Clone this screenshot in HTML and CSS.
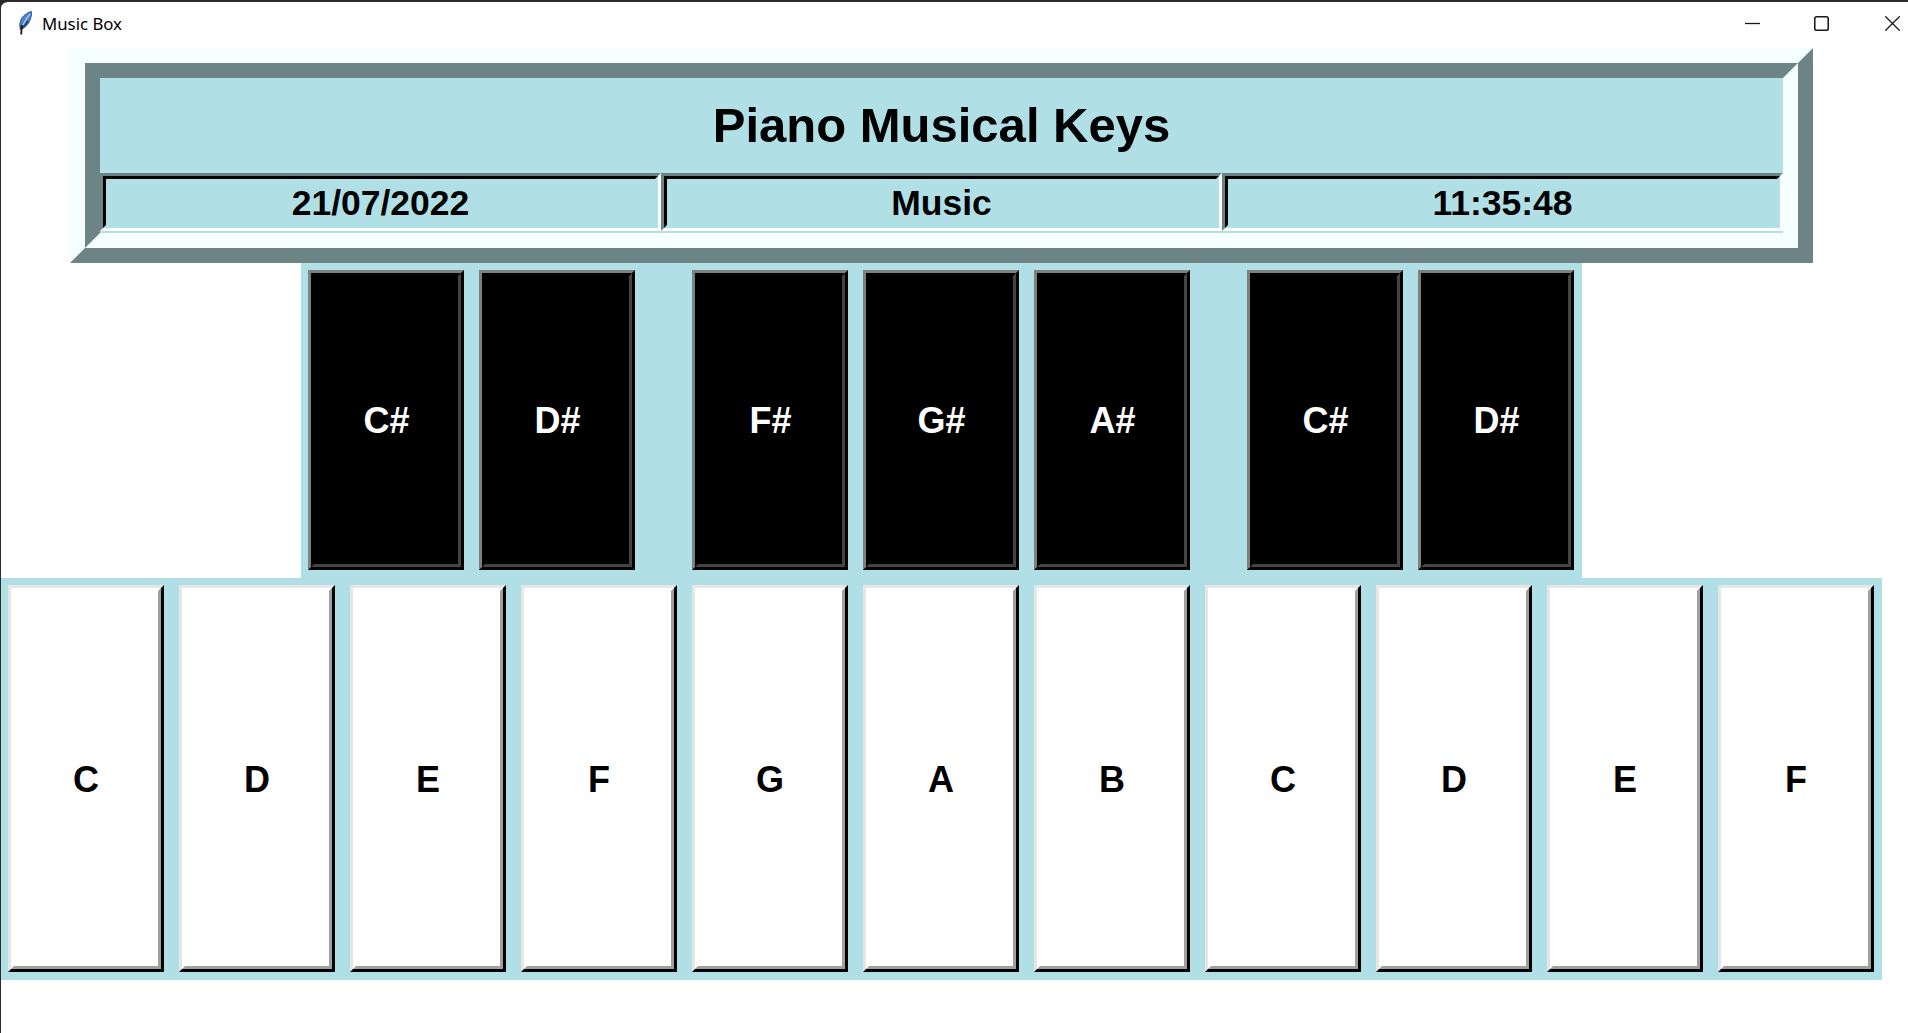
FILE: index.html
```html
<!DOCTYPE html>
<html lang="en">
<head>
<meta charset="utf-8">
<title>Music Box</title>
<link rel="stylesheet" href="styles.css">
</head>
<body>
<div class="window">
  <div class="titlebar">
    <svg class="app-icon" viewBox="0 0 16 24" aria-hidden="true">
      <path d="M13.500.5C9 1.500 4 5 2.500 10C1.500 13 1.500 15.500 2.500 18.500C6 17.500 9.500 14.500 11.500 10.500C13 7 13.800 3.500 13.500.5Z" fill="#4a82cf" stroke="#3d5f8f" stroke-width="1"/>
      <path d="M12 3C9 6.500 6.500 10 5 14" fill="none" stroke="#a9cdf2" stroke-width="1.200"/>
      <path d="M10 10C8.500 13 6 15.500 2.600 18" fill="none" stroke="#1f3558" stroke-width="1.600"/>
      <path d="M3.800 14L3.200 23.500" fill="none" stroke="#1a1a1a" stroke-width="1.800"/>
    </svg>
    <span class="app-name">Music Box</span>
    <div class="controls">
      <svg class="ctl ctl-min" viewBox="0 0 15 15" aria-hidden="true"><path d="M0 7.500H15"/></svg>
      <svg class="ctl ctl-max" viewBox="0 0 15 15" aria-hidden="true"><rect x=".75" y=".75" width="13.500" height="13.500" rx="2"/></svg>
      <svg class="ctl ctl-close" viewBox="0 0 15 15" aria-hidden="true"><path d="M.3.300L14.700 14.700M14.700.300L.3 14.700"/></svg>
    </div>
  </div>

  <header class="ridge">
    <div class="ridge-inner">
      <h1 class="heading">Piano Musical Keys</h1>
      <div class="info-row">
        <div class="info"><span class="info-bevel">21/07/2022</span></div>
        <div class="info"><span class="info-bevel">Music</span></div>
        <div class="info"><span class="info-bevel">11:35:48</span></div>
      </div>
    </div>
  </header>

  <section class="black-row">
    <button class="key key-black"><span class="bevel">C#</span></button>
    <button class="key key-black"><span class="bevel">D#</span></button>
    <div class="spacer"></div>
    <button class="key key-black"><span class="bevel">F#</span></button>
    <button class="key key-black"><span class="bevel">G#</span></button>
    <button class="key key-black"><span class="bevel">A#</span></button>
    <div class="spacer"></div>
    <button class="key key-black"><span class="bevel">C#</span></button>
    <button class="key key-black"><span class="bevel">D#</span></button>
  </section>

  <section class="white-row">
    <button class="key key-white"><span class="bevel">C</span></button>
    <button class="key key-white"><span class="bevel">D</span></button>
    <button class="key key-white"><span class="bevel">E</span></button>
    <button class="key key-white"><span class="bevel">F</span></button>
    <button class="key key-white"><span class="bevel">G</span></button>
    <button class="key key-white"><span class="bevel">A</span></button>
    <button class="key key-white"><span class="bevel">B</span></button>
    <button class="key key-white"><span class="bevel">C</span></button>
    <button class="key key-white"><span class="bevel">D</span></button>
    <button class="key key-white"><span class="bevel">E</span></button>
    <button class="key key-white"><span class="bevel">F</span></button>
  </section>
</div>
</body>
</html>
```
FILE: styles.css
```css
* { box-sizing: border-box; }

html, body {
  margin: 0;
  height: 100%;
  background: #2b2b2b;
  overflow: hidden;
}

.window {
  height: 1033px;
  background: #fff;
  border-top: 2px solid #2b2b2b;
  border-left: 1px solid #2b2b2b;
  border-top-left-radius: 8px;
  font-family: "Liberation Sans", Arial, sans-serif;
}

.titlebar {
  height: 46px;
  display: flex;
  align-items: center;
  padding-left: 17px;
}

.app-icon { width: 16px; height: 24px; margin-top: -5px; }

.app-name {
  margin-left: 8px;
  margin-top: -3px;
  font-family: "Noto Sans", sans-serif;
  font-size: 16.8px;
  color: #000;
}

.controls {
  margin-left: auto;
  display: flex;
  align-items: center;
  gap: 56px;
  padding-right: 8px;
  margin-top: -3px;
}

.ctl { width: 15px; height: 15px; display: block; fill: none; stroke: #1a1a1a; stroke-width: 1.3; }
.ctl-min { margin-right: -2px; }
.ctl-max { stroke-width: 1.6; }

.ridge {
  margin-left: 69px;
  width: 1743px;
  height: 215px;
  border: 15px solid;
  border-color: #f6ffff #6d8487 #6d8487 #f6ffff;
}

.ridge-inner {
  height: 100%;
  border: 15px solid;
  border-color: #6d8487 #f6ffff #f6ffff #6d8487;
  background: #b0e0e6;
  display: flex;
  flex-direction: column;
  padding-bottom: 2px;
}

.heading {
  margin: 0;
  height: 95px;
  padding-bottom: 2px;
  display: flex;
  align-items: center;
  justify-content: center;
  font-size: 49px;
  font-weight: 700;
  color: #000;
}

.info-row {
  flex: 1;
  display: grid;
  grid-template-columns: repeat(3, 1fr);
}

.info {
  border: 3px solid;
  border-color: #6d8487 #fff #fff #6d8487;
}

.info-bevel {
  height: 100%;
  display: flex;
  align-items: center;
  justify-content: center;
  padding-top: 2px;
  border: 3px solid;
  border-color: #000 #b0e0e6 #b0e0e6 #000;
  font-size: 35.5px;
  font-weight: 700;
  color: #000;
}

.black-row {
  margin-left: 300px;
  width: 1281px;
  height: 315px;
  padding: 7px;
  display: flex;
  gap: 15px;
  background: #b0e0e6;
}

.spacer { width: 27px; }

.white-row {
  width: 1881px;
  height: 402px;
  padding: 7px;
  display: flex;
  gap: 15px;
  background: #b0e0e6;
}

.key {
  display: block;
  width: 156px;
  padding: 0;
  border: 3px solid;
  font-family: inherit;
  font-size: 36px;
  font-weight: 700;
}

.black-row .key { height: 300px; flex: 0 0 156px; }
.white-row .key { height: 387px; flex: 0 0 156px; }

.bevel {
  height: 100%;
  display: flex;
  align-items: center;
  justify-content: center;
  padding-top: 2px;
  border: 3px solid;
}

.key-white {
  background: #fff;
  color: #000;
  border-color: #e6e6e6 #000 #000 #e6e6e6;
}
.key-white .bevel { border-color: #fff #a0a0a0 #a0a0a0 #fff; }

.key-black {
  background: #000;
  color: #fff;
  border-color: #808080 #000 #000 #808080;
}
.key-black .bevel { border-color: #000 #444 #444 #000; padding-left: 1px; }
```
